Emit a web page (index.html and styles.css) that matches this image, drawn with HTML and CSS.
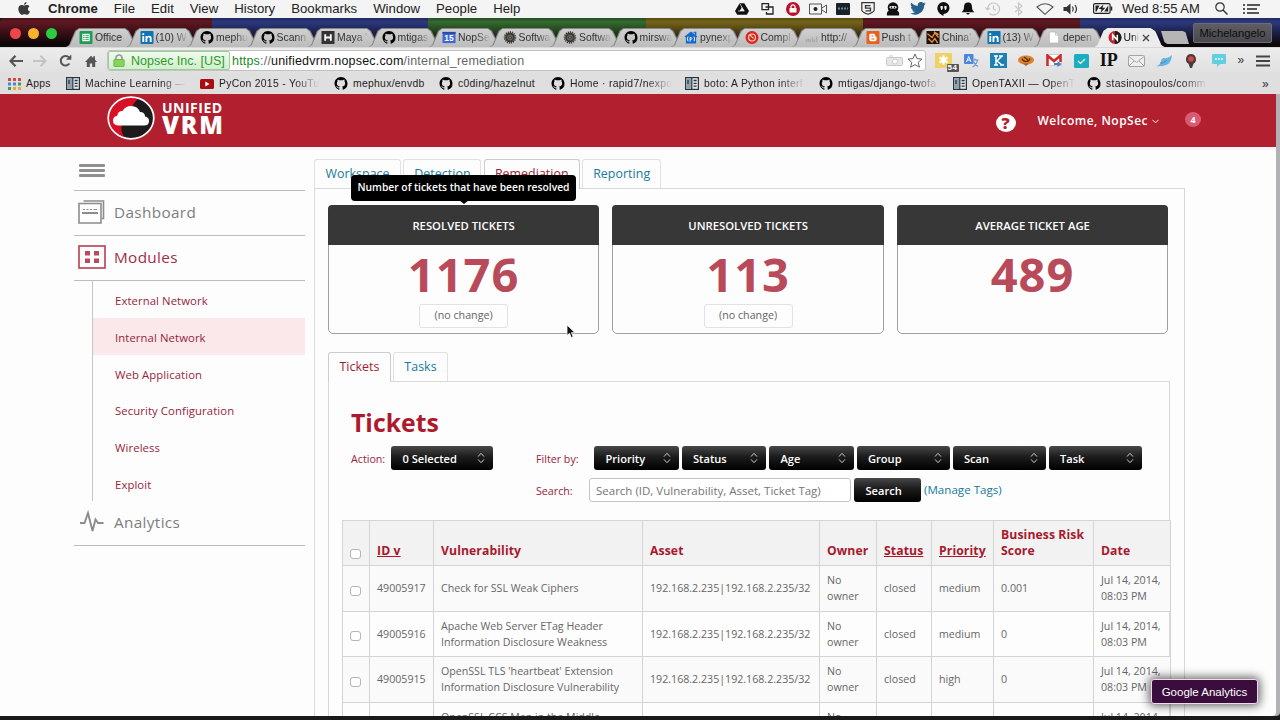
FILE: index.html
```html
<!DOCTYPE html>
<html lang="en">
<head>
<meta charset="UTF-8">
<meta name="viewport" content="width=device-width, initial-scale=1.0">
<title>Unified VRM</title>
<link rel="stylesheet" href="styles.css">
</head>
<body>

<!-- shared icons -->
<svg class="defs" width="0" height="0">
    <symbol id="i-github" viewBox="0 0 16 16"><path d="M8 0C3.58 0 0 3.58 0 8c0 3.54 2.29 6.53 5.47 7.59.4.07.55-.17.55-.38 0-.19-.01-.82-.01-1.49-2.01.37-2.53-.49-2.69-.94-.09-.23-.48-.94-.82-1.13-.28-.15-.68-.52-.01-.53.63-.01 1.08.58 1.23.82.72 1.21 1.87.87 2.33.66.07-.52.28-.87.51-1.07-1.78-.2-3.64-.89-3.64-3.95 0-.87.31-1.59.82-2.15-.08-.2-.36-1.02.08-2.12 0 0 .67-.21 2.2.82a7.6 7.6 0 0 1 4 0c1.53-1.04 2.2-.82 2.2-.82.44 1.1.16 1.92.08 2.12.51.56.82 1.27.82 2.15 0 3.07-1.87 3.75-3.65 3.95.29.25.54.73.54 1.48 0 1.07-.01 1.93-.01 2.2 0 .21.15.46.55.38A8 8 0 0 0 16 8c0-4.42-3.58-8-8-8z"/></symbol>
    <symbol id="i-linkedin" viewBox="0 0 14 14"><rect width="14" height="14" rx="1" fill="#0f74b3"/><path d="M2 5.3h2v6.5H2zM2 2.3h2v2H2zM5.4 5.3h1.9v1c.9-1.6 4.7-1.7 4.7 1.4v4.1h-2V8.2c0-1.7-2.6-1.6-2.6 0v3.6h-2z" fill="#fff"/></symbol>
    <symbol id="i-gear" viewBox="0 0 14 14"><circle cx="7" cy="7" r="5.8" fill="none" stroke="#3d3a36" stroke-width="1.8" stroke-dasharray="1.3 .9"/><circle cx="7" cy="7" r="5.2" fill="#3d3a36"/><circle cx="7" cy="7" r="2.6" fill="none" stroke="#8a8275" stroke-width=".8"/><circle cx="7" cy="7" r="1" fill="#8a8275"/></symbol>
    <symbol id="i-book" viewBox="0 0 14 13"><rect x=".6" y=".6" width="12.8" height="11.8" fill="#dfe7ec" stroke="#2b3238" stroke-width="1.2"/><rect x="1.2" y="1.2" width="5" height="10.6" fill="#8ca0b0"/><path d="M6.8 1v11M3 3v4" stroke="#2b3238" stroke-width="1.2"/><path d="M8.6 3.5h3M8.6 6.3h3M8.6 9.1h3" stroke="#2b3238" stroke-width="1.3"/></symbol>
    <symbol id="i-updown" viewBox="0 0 8 12"><path d="M1 4.6 4 1.3l3 3.3M1 7.4l3 3.3 3-3.3" fill="none" stroke="#ccc" stroke-width="1"/></symbol>
</svg>

<div class="menubar">
    <svg class="apple" viewBox="0 0 12 13"><path d="M8.6 0c.1 1.500-1.200 2.900-2.600 2.800C5.900 1.500 7.200.2 8.600 0zM6.200 3.600c.8 0 1.500-.6 2.700-.6 1 0 2 .5 2.600 1.400-2.300 1.300-1.900 4.400.5 5.200-.6 1.500-1.700 3.200-2.900 3.200-1 0-1.400-.6-2.600-.6s-1.600.6-2.500.6C2.500 12.800.3 9.600.3 6.900c0-2.500 1.600-3.900 3.200-3.900 1.200 0 2 .6 2.700.6z" fill="#3a3a3a"/></svg>
    <div class="menus">
        <b>Chrome</b><span>File</span><span>Edit</span><span>View</span><span>History</span><span>Bookmarks</span><span>Window</span><span>People</span><span>Help</span>
    </div>
    <div class="status">
        <i><svg width="14" height="12" viewBox="0 0 14 12"><path d="M4.700.3h4.600L14 8l-2.200 3.800H2.200L0 8z" fill="#111"/><path d="M7 4 4.700 8h4.600z" fill="#f3f3f3"/><path d="M5 .8 9 8M9.500 8H3" stroke="#f3f3f3" stroke-width=".7"/></svg></i>
        <i><svg width="13" height="12" viewBox="0 0 13 12"><path d="M1 .7h6.500v6H1zM4.500 4H12v7H5.500V9M7.500 4v2.700H4.500" fill="none" stroke="#222" stroke-width="1.300"/></svg></i>
        <i><svg width="14" height="14" viewBox="0 0 14 14"><circle cx="7" cy="7" r="7" fill="#b8112c"/><rect x="3.500" y="6" width="7" height="4.500" rx=".5" fill="#fff"/><path d="M5 6V4.800a2 2 0 0 1 4 0V6" fill="none" stroke="#fff" stroke-width="1.200"/></svg></i>
        <i><svg width="18" height="12" viewBox="0 0 18 12"><path d="M.5 1h12v10H.500zM13 5l4.500-3v8L13 7" fill="none" stroke="#444" stroke-width=".9"/><circle cx="6.500" cy="6" r="2" fill="#222"/></svg></i>
        <i><svg width="14" height="12" viewBox="0 0 14 12"><rect width="14" height="12" rx="1" fill="#1b2126"/><path d="M2 5.500h10" stroke="#5c87a8" stroke-width="2" stroke-dasharray="2 1"/></svg></i>
        <i><svg width="14" height="13" viewBox="0 0 14 13"><path d="M.8.700h12.400v7.500Q13 10 7 12.300 1 10 .8 8.200z" fill="none" stroke="#333" stroke-width="1.200"/><path d="M9.500 3.700h-5v2.500h5v2.700h-5" fill="none" stroke="#333" stroke-width="1.300"/></svg></i>
        <i><svg width="14" height="14" viewBox="0 0 14 14"><circle cx="7" cy="5.500" r="5.300" fill="#111"/><path d="M1 13.500Q0 9 4 8.500h6q4 .5 3 5z" fill="#111"/><rect x="3.500" y="4" width="7" height="2.600" rx="1.300" fill="#eee"/><circle cx="5.500" cy="5.300" r=".7"/><circle cx="8.500" cy="5.300" r=".7"/></svg></i>
        <i><svg width="16" height="13" viewBox="0 0 24 20"><path d="M7.500 19.500c9 0 14-7.500 14-14v-.6A10 10 0 0 0 24 2.300a10 10 0 0 1-2.800.8A5 5 0 0 0 23.300.4a10 10 0 0 1-3.100 1.200 4.900 4.900 0 0 0-8.400 4.500A14 14 0 0 1 1.700 1a4.900 4.900 0 0 0 1.500 6.600A5 5 0 0 1 1 7a4.900 4.900 0 0 0 4 4.900 5 5 0 0 1-2.200 0 4.900 4.900 0 0 0 4.600 3.500A10 10 0 0 1 0 17.400a14 14 0 0 0 7.500 2.100" fill="#27618d"/></svg></i>
        <i><svg width="13" height="14" viewBox="0 0 13 14"><path d="M6.500 0a6 6 0 0 1 0 12v2C3 12.500.3 9.500.3 6A6.200 6.200 0 0 1 6.500 0z" fill="#111"/><path d="M3.500 4h2.300v2.500L4.800 8H4V6.500h-.5zM7.300 4h2.300v2.500L8.600 8h-.8V6.500h-.5z" fill="#f3f3f3"/></svg></i>
        <i><svg width="14" height="13" viewBox="0 0 14 13"><path d="M7 .5c3 0 4 2 4 4.500 0 2.800 1 4 2.500 5.300H.5C2 9 3 7.800 3 5 3 2.500 4 .5 7 .5zM5.300 11h3.400q-.3 1.600-1.700 1.600T5.300 11z" fill="#111"/></svg></i>
        <i><svg width="16" height="14" viewBox="0 0 16 14"><path d="M2.500 7A6 6 0 1 1 4.500 11.500M.5 5.500l2 2.500 2.300-2M8.500 3.500V7l2.500 1.500" fill="none" stroke="#c4c4c4" stroke-width="1.200"/></svg></i>
        <i><svg width="9" height="14" viewBox="0 0 9 14"><path d="m1 4 7 6-3.500 3V1L8 4l-7 6" fill="none" stroke="#c6c6c6" stroke-width="1.100"/></svg></i>
        <i class="wide"><svg width="18" height="12" viewBox="0 0 18 12"><path d="M1 4Q9-2.500 17 4L9 11.300z" fill="none" stroke="#555" stroke-width="1.100"/></svg></i>
        <i><svg width="16" height="12" viewBox="0 0 16 12"><path d="M.5 4h3l4-3.500v11L3.500 8h-3z" fill="#333"/><path d="M9.500 3.500q1.500 2.500 0 5M12 2q3 4 0 8" fill="none" stroke="#333" stroke-width="1.200"/></svg></i>
        <i class="batt"><svg width="20" height="11" viewBox="0 0 20 11"><rect x=".6" y=".6" width="16.500" height="9.800" rx="1.500" fill="none" stroke="#222" stroke-width="1.200"/><path d="M18.500 3.500v4" stroke="#222" stroke-width="1.500"/><path d="M2.500 2.500h4l-3 6h-1zM15.200 2.500h-2.500M15.200 2.500v6h-4z" fill="#222"/><path d="m10.500 1.500-5 4.500h3l-1 3.800 5-5H9.500z" fill="#222"/></svg></i>
        <span class="clock">Wed 8:55 AM</span>
        <svg width="13" height="13" viewBox="0 0 13 13"><circle cx="5" cy="5" r="4.200" fill="none" stroke="#333" stroke-width="1.200"/><path d="m8 8 4.500 4.500" stroke="#333" stroke-width="1.400"/></svg>
        <svg class="list" width="17" height="10" viewBox="0 0 17 10"><path d="M0 1h2M0 5h2M0 9h2M4 1h13M4 5h10M4 9h12" stroke="#222" stroke-width="1.500"/></svg>
    </div>
</div>

<div class="tabstrip">
    <div class="lights"><i></i><i></i><i></i></div>
    <div class="tabs">
        <div class="tab"><svg class="fav" viewBox="0 0 14 14"><rect width="14" height="14" rx="1" fill="#1f9d57"/><rect x="3" y="3" width="8" height="8" fill="#fff"/><path d="M4 5h1.500M6.300 5H10M4 7h1.500M6.300 7H10M4 9h1.500M6.300 9H10" stroke="#1f9d57"/></svg><span>Office</span></div>
        <div class="tab"><svg class="fav"><use href="#i-linkedin"/></svg><span>(10) W</span></div>
        <div class="tab"><svg class="fav"><use href="#i-github"/></svg><span>mephu</span></div>
        <div class="tab"><svg class="fav"><use href="#i-github"/></svg><span>Scann</span></div>
        <div class="tab"><svg class="fav" viewBox="0 0 14 14"><rect width="14" height="14" fill="#333"/><path d="M4 3.500v7M10 3.500v7M4 7h6" stroke="#fff" stroke-width="2"/></svg><span>Maya '</span></div>
        <div class="tab"><svg class="fav"><use href="#i-github"/></svg><span>mtigas</span></div>
        <div class="tab"><svg class="fav" viewBox="0 0 14 14"><rect y="1" width="14" height="12" fill="#3f67d4"/><path d="M0 2h14" stroke="#274a9f" stroke-width="2"/><text x="7" y="11" text-anchor="middle" class="day">15</text></svg><span>NopSe</span></div>
        <div class="tab"><svg class="fav"><use href="#i-gear"/></svg><span>Softwa</span></div>
        <div class="tab"><svg class="fav"><use href="#i-gear"/></svg><span>Softwa</span></div>
        <div class="tab"><svg class="fav"><use href="#i-github"/></svg><span>mirswa</span></div>
        <div class="tab"><svg class="fav" viewBox="0 0 14 14"><path d="M7 .5 14 6l-1.500 1v6.500h-11V7L0 6z" fill="#1269c7"/><path d="M9.800 1.500h2.200v3" stroke="#1269c7" stroke-width="1.500" fill="none"/><path d="M3.800 6q-1.300 2.500 0 5M10.200 6q1.300 2.500 0 5M6 11.500V7h1.200q1.500 1 0 2.300H6" stroke="#fff" fill="none"/></svg><span>pynexp</span></div>
        <div class="tab"><svg class="fav" viewBox="0 0 14 14"><circle cx="7" cy="7" r="7" fill="#d8281c"/><circle cx="7" cy="7" r="3.700" fill="none" stroke="#ffd9c9" stroke-width="1.200"/><path d="M5 4.500 8.500 8" stroke="#ffd9c9" stroke-width="1.200"/></svg><span>Compl</span></div>
        <div class="tab"><svg class="fav" viewBox="0 0 14 14"><path d="M1 9v3M3 8v4M5 9v3M7.500 7v5M9.500 9v3M12 6v6" stroke="#aaa" stroke-width="1.600"/></svg><span>http://</span></div>
        <div class="tab"><svg class="fav" viewBox="0 0 14 14"><rect width="14" height="14" rx="1" fill="#e8611c"/><path d="M4.500 3h3q2 0 2 2v1q1.500 0 1.500 1.500V9q0 2-2 2H5q-2 0-2-2V4.500Q3 3 4.500 3z" fill="#fff"/><path d="M5.300 5.400h2M5.300 8.700h3.300" stroke="#e8611c" stroke-width="1.100"/></svg><span>Push t</span></div>
        <div class="tab"><svg class="fav" viewBox="0 0 14 14"><rect width="14" height="14" fill="#1c110b"/><path d="M1 3l5 4 3-5 4 5M2 8l4 4 3-4 3 5M8 1l5 3" stroke="#e98a3a" stroke-width="1.500" fill="none"/></svg><span>China'</span></div>
        <div class="tab"><svg class="fav"><use href="#i-linkedin"/></svg><span>(13) W</span></div>
        <div class="tab"><svg class="fav" viewBox="0 0 14 14"><path d="M2 1h6.500L12 4.500V13H2z" fill="#fff" stroke="#b5b5b5" stroke-width=".8"/><path d="M8.500 1v3.500H12" fill="none" stroke="#b5b5b5" stroke-width=".8"/></svg><span>depen</span></div>
        <div class="tab active"><svg class="fav" viewBox="0 0 14 14"><circle cx="7" cy="7" r="7" fill="#c9202f"/><path d="M7 0a7 7 0 0 1 0 14z" fill="#1c1c1c"/><path d="M4.500 10V4.200l5 5.600V4" fill="none" stroke="#fff" stroke-width="1.700"/></svg><span class="short">Uni</span><svg class="close" viewBox="0 0 8 8"><path d="m1 1 6 6M7 1 1 7" stroke="#444" stroke-width="1.300"/></svg></div>
    </div>
    <div class="newtab"></div>
    <div class="profile">Michelangelo</div>
</div>

<div class="toolbar">
    <svg width="14" height="12" viewBox="0 0 14 12"><path d="M6.500.8 1.500 6l5 5.200M1.500 6H14" fill="none" stroke="#555" stroke-width="2.200"/></svg>
    <svg width="14" height="12" viewBox="0 0 14 12"><path d="m7.500.8 5 5.200-5 5.200M12.500 6H0" fill="none" stroke="#c3c3c3" stroke-width="2"/></svg>
    <svg width="13" height="13" viewBox="0 0 13 13"><path d="M10.500 9.500A4.800 4.800 0 1 1 10 3.300" fill="none" stroke="#555" stroke-width="2"/><path d="M12.300.5v5.300H7z" fill="#555"/></svg>
    <svg width="12" height="12" viewBox="0 0 12 12"><path d="M6 .8 0 7h1.800v5h3V8.500h2.400V12h3V7H12l-2-2.200V1.200H8.300V3z" fill="#555"/></svg>
    <div class="omnibox">
        <div class="cert">
            <svg width="12" height="13" viewBox="0 0 12 13"><path d="M3 6V4a3 3 0 0 1 6 0v2" fill="none" stroke="#9a9a9a" stroke-width="1.700"/><rect x=".8" y="5.500" width="10.400" height="7" rx="1" fill="#86d45d" stroke="#5aa838" stroke-width=".7"/></svg>
            <span>Nopsec Inc. [US]</span>
        </div>
        <div class="url"><em>https</em>://<b>unifiedvrm.nopsec.com</b>/internal_remediation</div>
        <svg class="cam" width="17" height="11" viewBox="0 0 17 11"><rect x=".5" y="2.500" width="16" height="8" rx="1" fill="#e6e6e6" stroke="#c9c9c9"/><path d="M3 1h4" stroke="#ccc"/><circle cx="9" cy="6.500" r="2.500" fill="#fff" stroke="#c9c9c9"/></svg>
        <svg width="16" height="15" viewBox="0 0 16 15"><path d="m8 1 2 4.600 5 .5-3.800 3.200 1.200 4.900L8 11.600l-4.400 2.600 1.200-4.900L1 6.100l5-.5z" fill="#fff" stroke="#666" stroke-width="1"/></svg>
    </div>
    <div class="exts">
        <i class="key"><svg width="17" height="15" viewBox="0 0 17 15"><rect width="17" height="15" fill="#f0d264"/><path d="M8.500 2.500v9M4.500 4.500l8 5M12.500 4.500l-8 5" stroke="#fff" stroke-width="2.200"/></svg><small>54</small></i>
        <i><svg width="15" height="14" viewBox="0 0 15 14"><rect width="9.500" height="10" rx="1" fill="#4a86e0"/><path d="M2.500 8 4.700 2.500 7 8M3.300 6h3" fill="none" stroke="#fff"/><path d="M8 6h6.500M11 4.500V6M8.500 13q4-2 5-7M9.500 7.500q1 3 4.500 5" stroke="#6c93cb" stroke-width="1.200" fill="none"/></svg></i>
        <i><svg width="17" height="15" viewBox="0 0 17 15"><rect width="17" height="15" fill="#1e81b4"/><path d="M4 3h4M4 12h4M9 3h4M10 12h4M6 3v9M12 3 7 8l5 4" stroke="#fff" stroke-width="1.500" fill="none"/></svg></i>
        <i><svg width="16" height="11" viewBox="0 0 16 11"><ellipse cx="8" cy="5" rx="8" ry="4.500" fill="#d9822b"/><path d="M5 8.500h6L8 11z" fill="#b15d1b"/><path d="M4 3.500q1 3 4 3t4-3M6 2l4 3" stroke="#5a2b10" fill="none" stroke-width="1.200"/></svg></i>
        <i><svg width="16" height="13" viewBox="0 0 16 13"><rect x=".5" y=".5" width="15" height="11" fill="#fff" stroke="#ccc"/><path d="M1.500 12V1.500L8 7l6.500-5.500V8" fill="none" stroke="#cf2a2a" stroke-width="2.500"/><path d="M8 9h3.500V7l4 3-4 3v-2H8z" fill="#4a79c9"/></svg></i>
        <i><svg width="15" height="14" viewBox="0 0 15 14"><rect width="15" height="14" rx="1.500" fill="#1badc0"/><path d="m4 7 2.500 2.500L11 5" fill="none" stroke="#fff" stroke-width="1.200"/></svg></i>
        <i class="ip">IP</i>
        <i><svg width="17" height="12" viewBox="0 0 17 12"><rect x=".5" y=".5" width="16" height="11" rx="1" fill="#eee" stroke="#a5a5a5"/><path d="m1 1.500 7.500 6 7.500-6M1 11l5-5M16 11l-5-5" fill="none" stroke="#a5a5a5"/></svg></i>
        <i><svg width="16" height="12" viewBox="0 0 16 12"><path d="M0 11q4-1 5-4 0-4 3.500-4Q12 4 16 0q-1 9-6 10-5 2-10 1z" fill="#67b3e2"/><path d="M4 8q4 1 7-3" stroke="#3f8dc6" fill="none"/></svg></i>
        <i><svg width="12" height="14" viewBox="0 0 12 14"><path d="M6 0a5.300 5.300 0 0 1 2.500 9.800L7 14H5l-1.500-4.200A5.300 5.300 0 0 1 6 0z" fill="#4a3d3d"/><circle cx="6" cy="5" r="2.800" fill="#d84747"/></svg></i>
        <i><svg width="14" height="13" viewBox="0 0 14 13"><path d="M1 0h12q1 0 1 1v8q0 1-1 1H8l-3 3v-3H1q-1 0-1-1V1q0-1 1-1z" fill="#62cfe0"/><path d="M3 5h1.800M6.100 5h1.800M9.200 5H11" stroke="#fff" stroke-width="1.500"/></svg></i>
    </div>
    <span class="more">»</span>
    <svg class="burger" width="14" height="12" viewBox="0 0 14 12"><path d="M0 1.500h14M0 6h14M0 10.500h14" stroke="#444" stroke-width="2.200"/></svg>
</div>

<div class="bookmarks">
    <div class="bm apps"><svg width="13" height="12" viewBox="0 0 13 12"><g fill="#d04a3f"><rect width="3" height="3"/><rect x="5" width="3" height="3"/><rect x="10" width="3" height="3"/></g><g fill="#4b86d8"><rect y="4.500" width="3" height="3"/><rect x="5" y="4.500" width="3" height="3"/><rect x="10" y="4.500" width="3" height="3" fill="#3b9b57"/></g><g fill="#e2a93a"><rect y="9" width="3" height="3" fill="#3b9b57"/><rect x="5" y="9" width="3" height="3"/><rect x="10" y="9" width="3" height="3"/></g></svg><span>Apps</span></div>
    <div class="bm"><svg width="14" height="13"><use href="#i-book"/></svg><span>Machine Learning —</span></div>
    <div class="bm"><svg width="14" height="10" viewBox="0 0 14 10"><rect width="14" height="10" rx="1.500" fill="#a80f12"/><path d="M5.300 2.500v5L9.500 5z" fill="#fff"/></svg><span>PyCon 2015 - YouTu</span></div>
    <div class="bm b3"><svg width="14" height="13"><use href="#i-github"/></svg><span>mephux/envdb</span></div>
    <div class="bm b4"><svg width="14" height="13"><use href="#i-github"/></svg><span>c0ding/hazelnut</span></div>
    <div class="bm"><svg width="14" height="13"><use href="#i-github"/></svg><span>Home · rapid7/nexpo</span></div>
    <div class="bm"><svg width="14" height="13"><use href="#i-book"/></svg><span>boto: A Python interf</span></div>
    <div class="bm"><svg width="14" height="13"><use href="#i-github"/></svg><span>mtigas/django-twofa</span></div>
    <div class="bm"><svg width="14" height="13"><use href="#i-book"/></svg><span>OpenTAXII — OpenT</span></div>
    <div class="bm"><svg width="14" height="13"><use href="#i-github"/></svg><span>stasinopoulos/comm</span></div>
    <span class="more">»</span>
</div>

<div class="page">
    <header class="header">
        <div class="logo">
            <svg width="48" height="44" viewBox="0 0 48 44"><ellipse cx="24" cy="22" rx="22.800" ry="20.800" fill="#d90f26"/><path d="M31 2.500A22.800 20.800 0 0 1 24 42.800q-12 0-9-15h7q-2-14 9-25.300z" fill="#1f1b1c"/><path d="M12 29.500q-6 0-6-5 0-4 4.500-5 0-4.500 5-4.500 3-5 8.500-5 7 0 9 6 5 0 5 4.500 4 .5 4 4.500 0 4.500-5 4.500z" fill="#fff"/><ellipse cx="24" cy="22" rx="22.800" ry="20.800" fill="none" stroke="#fff" stroke-width="1.700"/></svg>
            <div class="brand"><span>UNIFIED</span><strong>VRM</strong></div>
        </div>
        <div class="user">
            <span class="help">?</span>
            <span class="welcome">Welcome, NopSec</span>
            <svg class="caret" width="7" height="5" viewBox="0 0 7 5"><path d="m.5.8 3 3 3-3" fill="none" stroke="#fff" stroke-width="1"/></svg>
            <span class="count">4</span>
        </div>
    </header>

    <div class="main">
        <nav class="sidebar">
            <div class="toggle"><i></i><i></i><i></i></div>
            <a class="item"><svg width="28" height="24" viewBox="0 0 28 24"><path d="M5.500 1h20v17.500H24M1 3.500h22V23H1z" fill="none" stroke="#8c8c8c" stroke-width="1.600"/><path d="M5 9.500h2M8.500 9.500h2M12 9.500h2M15.500 9.500H19" stroke="#8c8c8c" stroke-width="1.200"/><path d="M4 13h16" stroke="#8c8c8c" stroke-width="2.200"/></svg>Dashboard</a>
            <a class="item on"><svg width="28" height="24" viewBox="0 0 28 24"><rect x="1" y="1" width="26" height="22" fill="none" stroke="#b94a5c" stroke-width="1.700"/><path d="M7 6h5v4.500H7zM16 6h5v4.500h-5zM7 13.500h5V18H7zM16 13.500h5V18h-5z" fill="#b94a5c"/></svg>Modules</a>
            <div class="sub">
                <a>External Network</a>
                <a class="current">Internal Network</a>
                <a>Web Application</a>
                <a>Security Configuration</a>
                <a>Wireless</a>
                <a>Exploit</a>
            </div>
            <a class="item"><svg width="28" height="24" viewBox="0 0 28 24"><path d="M2 13h4.500L10 3l4.500 18 3-11.500 2.500 3.500h5.500" fill="none" stroke="#8c8c8c" stroke-width="1.900"/></svg>Analytics</a>
        </nav>

        <section class="content">
            <div class="navtabs">
                <a class="t1">Workspace</a><a class="t2">Detection</a><a class="t3 sel">Remediation</a><a class="t4">Reporting</a>
            </div>
            <div class="body">
                <div class="cards">
                    <div class="card">
                        <div class="tooltip">Number of tickets that have been resolved</div>
                        <h3>RESOLVED TICKETS</h3>
                        <div class="num">1176</div>
                        <span class="change">(no change)</span>
                    </div>
                    <div class="card">
                        <h3>UNRESOLVED TICKETS</h3>
                        <div class="num">113</div>
                        <span class="change">(no change)</span>
                    </div>
                    <div class="card">
                        <h3>AVERAGE TICKET AGE</h3>
                        <div class="num">489</div>
                    </div>
                </div>

                <div class="navtabs inner">
                    <a class="t5 sel">Tickets</a><a class="t6">Tasks</a>
                </div>
                <div class="panel">
                    <h1>Tickets</h1>
                    <div class="filters">
                        <label class="l1">Action:</label>
                        <button class="w102">0 Selected<svg><use href="#i-updown"/></svg></button>
                        <label class="l2">Filter by:</label>
                        <button>Priority<svg><use href="#i-updown"/></svg></button>
                        <button>Status<svg><use href="#i-updown"/></svg></button>
                        <button>Age<svg><use href="#i-updown"/></svg></button>
                        <button class="w93">Group<svg><use href="#i-updown"/></svg></button>
                        <button class="w93">Scan<svg><use href="#i-updown"/></svg></button>
                        <button class="w93">Task<svg><use href="#i-updown"/></svg></button>
                    </div>
                    <div class="search">
                        <label>Search:</label>
                        <input type="text" placeholder="Search (ID, Vulnerability, Asset, Ticket Tag)">
                        <button>Search</button>
                        <a>(Manage Tags)</a>
                    </div>
                    <table>
                        <colgroup><col class="c1"><col class="c2"><col class="c3"><col class="c4"><col class="c5"><col class="c6"><col class="c7"><col class="c8"><col class="c9"></colgroup>
                        <tr><th><i class="box"></i></th><th><u>ID v</u></th><th>Vulnerability</th><th>Asset</th><th>Owner</th><th><u>Status</u></th><th><u>Priority</u></th><th>Business Risk Score</th><th>Date</th></tr>
                        <tr class="odd"><td><i class="box"></i></td><td>49005917</td><td>Check for SSL Weak Ciphers</td><td>192.168.2.235|192.168.2.235/32</td><td>No<br>owner</td><td>closed</td><td>medium</td><td>0.001</td><td>Jul 14, 2014,<br>08:03 PM</td></tr>
                        <tr><td><i class="box"></i></td><td>49005916</td><td>Apache Web Server ETag Header<br>Information Disclosure Weakness</td><td>192.168.2.235|192.168.2.235/32</td><td>No<br>owner</td><td>closed</td><td>medium</td><td>0</td><td>Jul 14, 2014,<br>08:03 PM</td></tr>
                        <tr class="odd"><td><i class="box"></i></td><td>49005915</td><td>OpenSSL TLS 'heartbeat' Extension<br>Information Disclosure Vulnerability</td><td>192.168.2.235|192.168.2.235/32</td><td>No<br>owner</td><td>closed</td><td>high</td><td>0</td><td>Jul 14, 2014,<br>08:03 PM</td></tr>
                        <tr><td></td><td></td><td>OpenSSL CCS Man in the Middle<br>Security Bypass Vulnerability</td><td></td><td>No<br>owner</td><td></td><td></td><td></td><td>Jul 14, 2014,<br>08:03 PM</td></tr>
                    </table>
                </div>
            </div>
        </section>
    </div>
</div>

<div class="ga">Google Analytics</div>
<svg class="cursor" width="10" height="15" viewBox="0 0 10 15"><path d="M1 1v10.500l2.500-2.200 1.800 4.200 1.900-.8-1.800-4H9z" fill="#111" stroke="#fff" stroke-width=".8"/></svg>

</body>
</html>
```
FILE: styles.css
```css
* {
    box-sizing: border-box;
}
body {
    margin: 0;
    width: 1280px;
    height: 720px;
    overflow: hidden;
    background: #1a1a1a;
    font-family: "Liberation Sans", Arial, sans-serif;
    display: flex;
    flex-direction: column;
}
svg {
    display: block;
    flex: none;
}
.defs {
    position: absolute;
}
i, em {
    font-style: normal;
}

/* mac menu bar */
.menubar {
    height: 18px;
    flex: none;
    background: #f4f4f4;
    display: flex;
    align-items: center;
    padding-left: 18px;
    font-size: 13.2px;
    color: #222;
}
.apple {
    width: 12px;
    height: 13px;
    margin: -2px 18px 0 0;
}
.menus {
    display: flex;
    gap: 16px;
    flex: 1;
    white-space: nowrap;
    padding-bottom: 1px;
}
.status {
    display: flex;
    align-items: center;
    padding: 0 20px 1px 0;
}
.status i {
    width: 25.1px;
    display: flex;
    justify-content: center;
}
.status .wide {
    width: 28px;
}
.status .batt {
    width: 37px;
}
.clock {
    width: 94px;
    padding-left: 1px;
    font-size: 13px;
}
.list {
    margin-left: 15px;
}

/* browser tabs */
.tabstrip {
    height: 30px;
    flex: none;
    display: flex;
    border-radius: 5px 0 0 0;
    background: linear-gradient(rgba(0,0,0,.3), rgba(0,0,0,.05) 4px, rgba(0,0,0,.25) 9px, #0c0709 26px),
        linear-gradient(90deg, #661a24 212px, #2f3c86 212px, #2f3c86 428px, #377031 428px, #377031 646px, #7d6a1c 646px, #7d6a1c 863px, #661a24 863px, #661a24 1080px, #2f3c86 1080px);
    border-bottom: 1px solid #d8d8d8;
}
.lights {
    width: 66px;
    padding: 10px 0 0 10px;
    display: flex;
    gap: 7px;
}
.lights i {
    width: 11px;
    height: 11px;
    border-radius: 50%;
    background: #f0454b;
}
.lights i:nth-child(2) {
    background: #f5b32c;
}
.lights i:nth-child(3) {
    background: #2ccc42;
}
.tabs {
    display: flex;
    padding-top: 10px;
}
.tab {
    position: relative;
    width: 60.5px;
    padding-left: 13px;
    display: flex;
    align-items: center;
    font-size: 10.4px;
    color: #333;
}
.tab::before, .tab::after {
    content: "";
    position: absolute;
    left: 0;
    top: 0;
    width: 73px;
    height: 19px;
    background: #868686;
    clip-path: polygon(0 100%, 3px 90%, 9px 14%, 13px 0, 59px 0, 63px 14%, 70px 90%, 73px 100%);
}
.tab::after {
    left: 1px;
    top: 1px;
    width: 71px;
    height: 18px;
    background: linear-gradient(#cfcfcf, #bcbcbc);
    clip-path: polygon(0 100%, 3px 90%, 9px 14%, 12px 0, 58px 0, 61px 14%, 68px 90%, 71px 100%);
}
.tab .fav, .tab span, .tab .close {
    position: relative;
    z-index: 2;
}
.fav {
    width: 14px;
    height: 13px;
}
.tab span {
    margin-left: 2px;
    width: 34px;
    flex: none;
    white-space: nowrap;
    mask-image: linear-gradient(90deg, #000 55%, transparent 95%);
}
.tab:first-child span {
    mask-image: none;
}
.tab .short {
    width: 16px;
}
.close {
    width: 8px;
    height: 8px;
    margin-left: 2px;
}
.tab.active::before, .tab.active::after {
    width: 69px;
    background: #ececec;
    clip-path: polygon(0 100%, 3px 90%, 9px 14%, 13px 0, 56px 0, 60px 14%, 66px 90%, 69px 100%);
}
.tab.active {
    z-index: 3;
    color: #111;
}
.day {
    font: bold 9px "Liberation Sans", sans-serif;
    fill: #fff;
}
.newtab {
    width: 28px;
    height: 13px;
    margin: 13px 0 0 6px;
    background: #b5b5b5;
    clip-path: polygon(0 0, 78% 0, 88% 12%, 100% 100%, 22% 100%, 12% 85%);
}
.profile {
    width: 79px;
    height: 20px;
    margin: 5px 0 0 4px;
    border-radius: 2px;
    background: linear-gradient(#5d5d63, #48484d);
    border: 1px solid #6c6c72;
    color: #0d0d0d;
    font-size: 11.2px;
    line-height: 19px;
    text-align: center;
}

/* address bar */
.toolbar {
    height: 25px;
    flex: none;
    background: linear-gradient(#ececec, #e0e0e0);
    display: flex;
    align-items: center;
    padding-left: 9px;
}
.toolbar > svg {
    margin-right: 10px;
}
.toolbar > svg:nth-of-type(3) {
    margin-right: 13px;
}
.toolbar > svg:nth-of-type(2) {
    margin-right: 12px;
}
.omnibox {
    width: 819px;
    height: 21px;
    background: #fff;
    border: 1px solid #c2c2c2;
    border-radius: 3px;
    display: flex;
    align-items: center;
}
.cert {
    width: 122px;
    height: 19px;
    border: 1px solid #9ccf97;
    border-radius: 2px;
    background: linear-gradient(#effaec, #d2efcd);
    display: flex;
    align-items: center;
    padding-left: 4px;
    gap: 6px;
    font-size: 12.5px;
    color: #2c9b2c;
    white-space: nowrap;
}
.url {
    flex: 1;
    padding-left: 2px;
    font-size: 12.5px;
    letter-spacing: .19px;
    color: #666;
}
.url em {
    color: #1d8a1d;
}
.url b {
    font-weight: normal;
    color: #111;
}
.cam {
    margin-right: 4px;
}
.omnibox svg:last-child {
    margin-right: 2px;
}
.exts {
    display: flex;
    margin-left: 4px;
}
.exts i {
    position: relative;
    width: 27.5px;
    height: 20px;
    display: flex;
    align-items: center;
    justify-content: center;
}
.exts small {
    position: absolute;
    right: -1px;
    bottom: -1px;
    padding: 0 1px;
    background: #555;
    color: #fff;
    font: bold 8px/8px "Liberation Sans", sans-serif;
    letter-spacing: .5px;
    border-radius: 1px;
}
.exts .ip {
    font: bold 18px "Liberation Serif", serif;
    color: #111;
}
.more {
    font-size: 12px;
    color: #333;
}
.toolbar .more {
    margin: 0 0 2px 5px;
    width: 18px;
}

/* bookmarks bar */
.bookmarks {
    height: 21px;
    flex: none;
    background: #dfdfdf;
    display: flex;
    align-items: center;
    padding-left: 8px;
    font-size: 10.4px;
    letter-spacing: .28px;
    color: #222;
}
.bm {
    width: 120px;
    margin-right: 14px;
    display: flex;
    align-items: center;
    gap: 5px;
    flex: none;
}
.bm span {
    flex: 1;
    white-space: nowrap;
    mask-image: linear-gradient(90deg, #000 75%, transparent);
}
.bm.apps {
    width: 44px;
}
.bm.b3 {
    width: 91px;
}
.bm.b4 {
    width: 98px;
}
.bm.apps span, .bm.b3 span, .bm.b4 span {
    mask-image: none;
}
.bookmarks .more {
    margin-left: 41px;
}

/* page */
.page {
    height: 622px;
    width: 1276px;
    flex: none;
    background: #fdfdfd;
    overflow: hidden;
    border-radius: 0 0 4px 0;
    box-shadow: 4px 0 0 #b2b2b4;
    font-family: "Open Sans", sans-serif;
    color: #666;
}
.header {
    height: 53px;
    background: #b21f2f;
    display: flex;
    justify-content: space-between;
    padding-left: 107px;
}
.logo {
    display: flex;
    align-items: flex-start;
    gap: 7px;
    padding-top: 2px;
}
.brand {
    display: flex;
    flex-direction: column;
    color: #fff;
    padding-top: 4px;
}
.brand span {
    font-size: 14px;
    line-height: 15px;
    letter-spacing: .5px;
    font-weight: 700;
}
.brand strong {
    font-size: 24.500px;
    line-height: 19px;
    letter-spacing: 1.800px;
    font-weight: 800;
}
.user {
    display: flex;
    align-items: flex-start;
    color: #fff;
    padding-right: 75px;
}
.help {
    width: 20px;
    height: 18px;
    margin-top: 20px;
    border-radius: 50%;
    background: #fff;
    color: #b21f2f;
    font-weight: 800;
    font-size: 16px;
    line-height: 18px;
    text-align: center;
}
.welcome {
    margin: 18px 4px 0 22px;
    font-size: 12px;
    font-weight: 600;
    letter-spacing: .48px;
    line-height: 18px;
}
.caret {
    margin-top: 25px;
}
.count {
    width: 16px;
    height: 15px;
    margin: 18px 0 0 26px;
    border-radius: 50%;
    background: #d95a73;
    font-size: 9px;
    font-weight: 700;
    line-height: 15px;
    text-align: center;
}
.main {
    display: flex;
    gap: 9px;
    padding-left: 74px;
    border-top: 3px solid #f4f5f8;
}

/* sidebar */
.sidebar {
    width: 231px;
}
.toggle {
    height: 41px;
    border-bottom: 1px solid #bdbdbd;
    padding: 14px 0 0 5px;
}
.toggle i {
    display: block;
    width: 26px;
    height: 2.6px;
    margin-bottom: 2.4px;
    background: #8f8f8f;
    border-radius: 1px;
}
.item {
    height: 45px;
    border-bottom: 1px solid #bdbdbd;
    display: flex;
    align-items: center;
    gap: 8px;
    padding: 0 0 3px 4px;
    font-size: 15.3px;
    letter-spacing: .35px;
    color: #7d7d7d;
}
.item.on {
    color: #a03048;
}
.sub {
    margin-left: 18px;
    border-left: 1px solid #c6c6c6;
    height: 220px;
    display: flex;
    flex-direction: column;
}
.sub a {
    height: 36.8px;
    flex: none;
    padding-left: 22px;
    font-size: 11.3px;
    letter-spacing: .1px;
    line-height: 39px;
    color: #97243c;
}
.sub .current {
    background: #fbe8ea;
}

/* content */
.content {
    width: 871px;
    padding-top: 9px;
}
.navtabs {
    display: flex;
    gap: 2.4px;
    height: 30px;
    margin-bottom: -1px;
    position: relative;
}
.navtabs a {
    height: 29px;
    border: 1px solid #e1e1e1;
    border-bottom: none;
    border-radius: 3px 3px 0 0;
    text-align: center;
    font-size: 12.4px;
    line-height: 27px;
    letter-spacing: .05px;
    color: #17799a;
    background: #fdfdfd;
}
.navtabs .sel {
    height: 30px;
    color: #a01c32;
    border-color: #ccc;
}
.t1 { width: 87px; }
.t2 { width: 78px; }
.t3 { width: 96px; }
.t4 { width: 79px; }
.body {
    border: 1px solid #d9d9d9;
    padding: 16px 14px 0 13px;
    height: 560px;
}
.cards {
    display: flex;
    gap: 13.3px;
}
.card {
    position: relative;
    width: 271.200px;
    height: 129px;
    border: 1px solid #a0a0a0;
    border-radius: 5px;
    text-align: center;
    display: flex;
    flex-direction: column;
    align-items: center;
}
.card h3 {
    align-self: stretch;
    margin: -1px -1px 0;
    height: 40px;
    border-radius: 4px 4px 0 0;
    background: #373737;
    color: #fff;
    font-size: 11.3px;
    font-weight: 600;
    line-height: 41px;
}
.num {
    font-size: 47px;
    font-weight: 700;
    line-height: 58px;
    letter-spacing: 1px;
    height: 59px;
    color: #b84a5a;
}
.change {
    width: 89px;
    height: 24px;
    border: 1px solid #e2e2e2;
    border-radius: 3px;
    font-size: 10.7px;
    line-height: 21px;
}
.tooltip {
    position: absolute;
    left: 22px;
    top: -31px;
    width: 225px;
    height: 26px;
    border-radius: 4px;
    background: #000;
    color: #fff;
    font-size: 10.3px;
    font-weight: 600;
    line-height: 25px;
    z-index: 2;
}
.tooltip::after {
    content: "";
    position: absolute;
    left: 108px;
    top: 25px;
    border: 5px solid transparent;
    border-top: 4px solid #000;
    border-bottom: none;
}
.inner {
    margin-top: 18px;
    gap: 2px;
}
.inner a {
    line-height: 28px;
}
.t5 { width: 63px; }
.t6 { width: 55px; }
.panel {
    width: 842px;
    border: 1px solid #d9d9d9;
    padding: 22px 0 0 13px;
    height: 400px;
}
h1 {
    margin: 0 0 6px 9px;
    font-size: 24.800px;
    line-height: 36px;
    color: #ae1a2c;
}
.filters, .search {
    display: flex;
    align-items: center;
    padding-left: 9px;
    gap: 3px;
    height: 24px;
    font-size: 10.700px;
    color: #97243c;
}
.filters .l1 {
    width: 37px;
}
.filters .l2 {
    width: 55px;
    margin-left: 40px;
}
.filters label, .search label {
    padding-top: 1px;
}
button {
    width: 84.500px;
    height: 24px;
    flex: none;
    border: none;
    border-radius: 3px;
    background: linear-gradient(#484848, #1c1c1c 45%, #000);
    color: #fff;
    font: 600 11.1px "Open Sans", sans-serif;
    padding: 0 8px 0 11.500px;
    display: flex;
    align-items: center;
    justify-content: space-between;
}
button svg {
    width: 8px;
    height: 12px;
}
.w102 {
    width: 102px;
}
.w93 {
    width: 93px;
}
.search {
    margin-top: 8px;
    padding-left: 194px;
}
.search label {
    width: 50px;
}
.search input {
    width: 262px;
    height: 24px;
    border: 1px solid #c4c4c4;
    border-radius: 3px;
    padding: 0 6px;
    background: #fff;
    font: 11.500px "Open Sans", sans-serif;
}
.search input::placeholder {
    color: #757575;
}
.search button {
    width: 67px;
}
.search a {
    font-size: 11.600px;
    color: #17799a;
    padding-bottom: 2px;
}

/* tickets table */
table {
    width: 827.500px;
    margin-top: 18px;
    table-layout: fixed;
    border-collapse: collapse;
    font-size: 10.650px;
    line-height: 16px;
}
th, td {
    border: 1px solid #d4d4d4;
    padding: 0 7px;
    height: 45.600px;
    text-align: left;
    white-space: nowrap;
}
th {
    height: 45px;
    background: #f2f2f2;
    color: #a8182c;
    font-size: 12.200px;
    letter-spacing: .1px;
    vertical-align: bottom;
    padding-bottom: 6px;
    white-space: normal;
}
.odd {
    background: #fafafa;
}
.box {
    display: block;
    width: 11px;
    height: 10px;
    margin-top: 5px;
    border: 1px solid #b5b5b5;
    border-radius: 3px;
    background: #fff;
}
.c1 { width: 27px; }
.c2 { width: 64px; }
.c3 { width: 209px; }
.c4 { width: 177px; }
.c5 { width: 57px; }
.c6 { width: 55px; }
.c7 { width: 62px; }
.c8 { width: 100px; }
.c9 { width: 76.500px; }

/* overlays */
.ga {
    position: absolute;
    left: 1151px;
    top: 679px;
    width: 107px;
    height: 25px;
    border: 1px solid #efd9ef;
    border-radius: 3px;
    background: #3a0d3c;
    color: #fff;
    font-size: 11.500px;
    line-height: 24px;
    text-align: center;
    box-shadow: 0 0 10px 2px rgba(0,0,0,.6);
}
.cursor {
    position: absolute;
    left: 566px;
    top: 324px;
}
```
